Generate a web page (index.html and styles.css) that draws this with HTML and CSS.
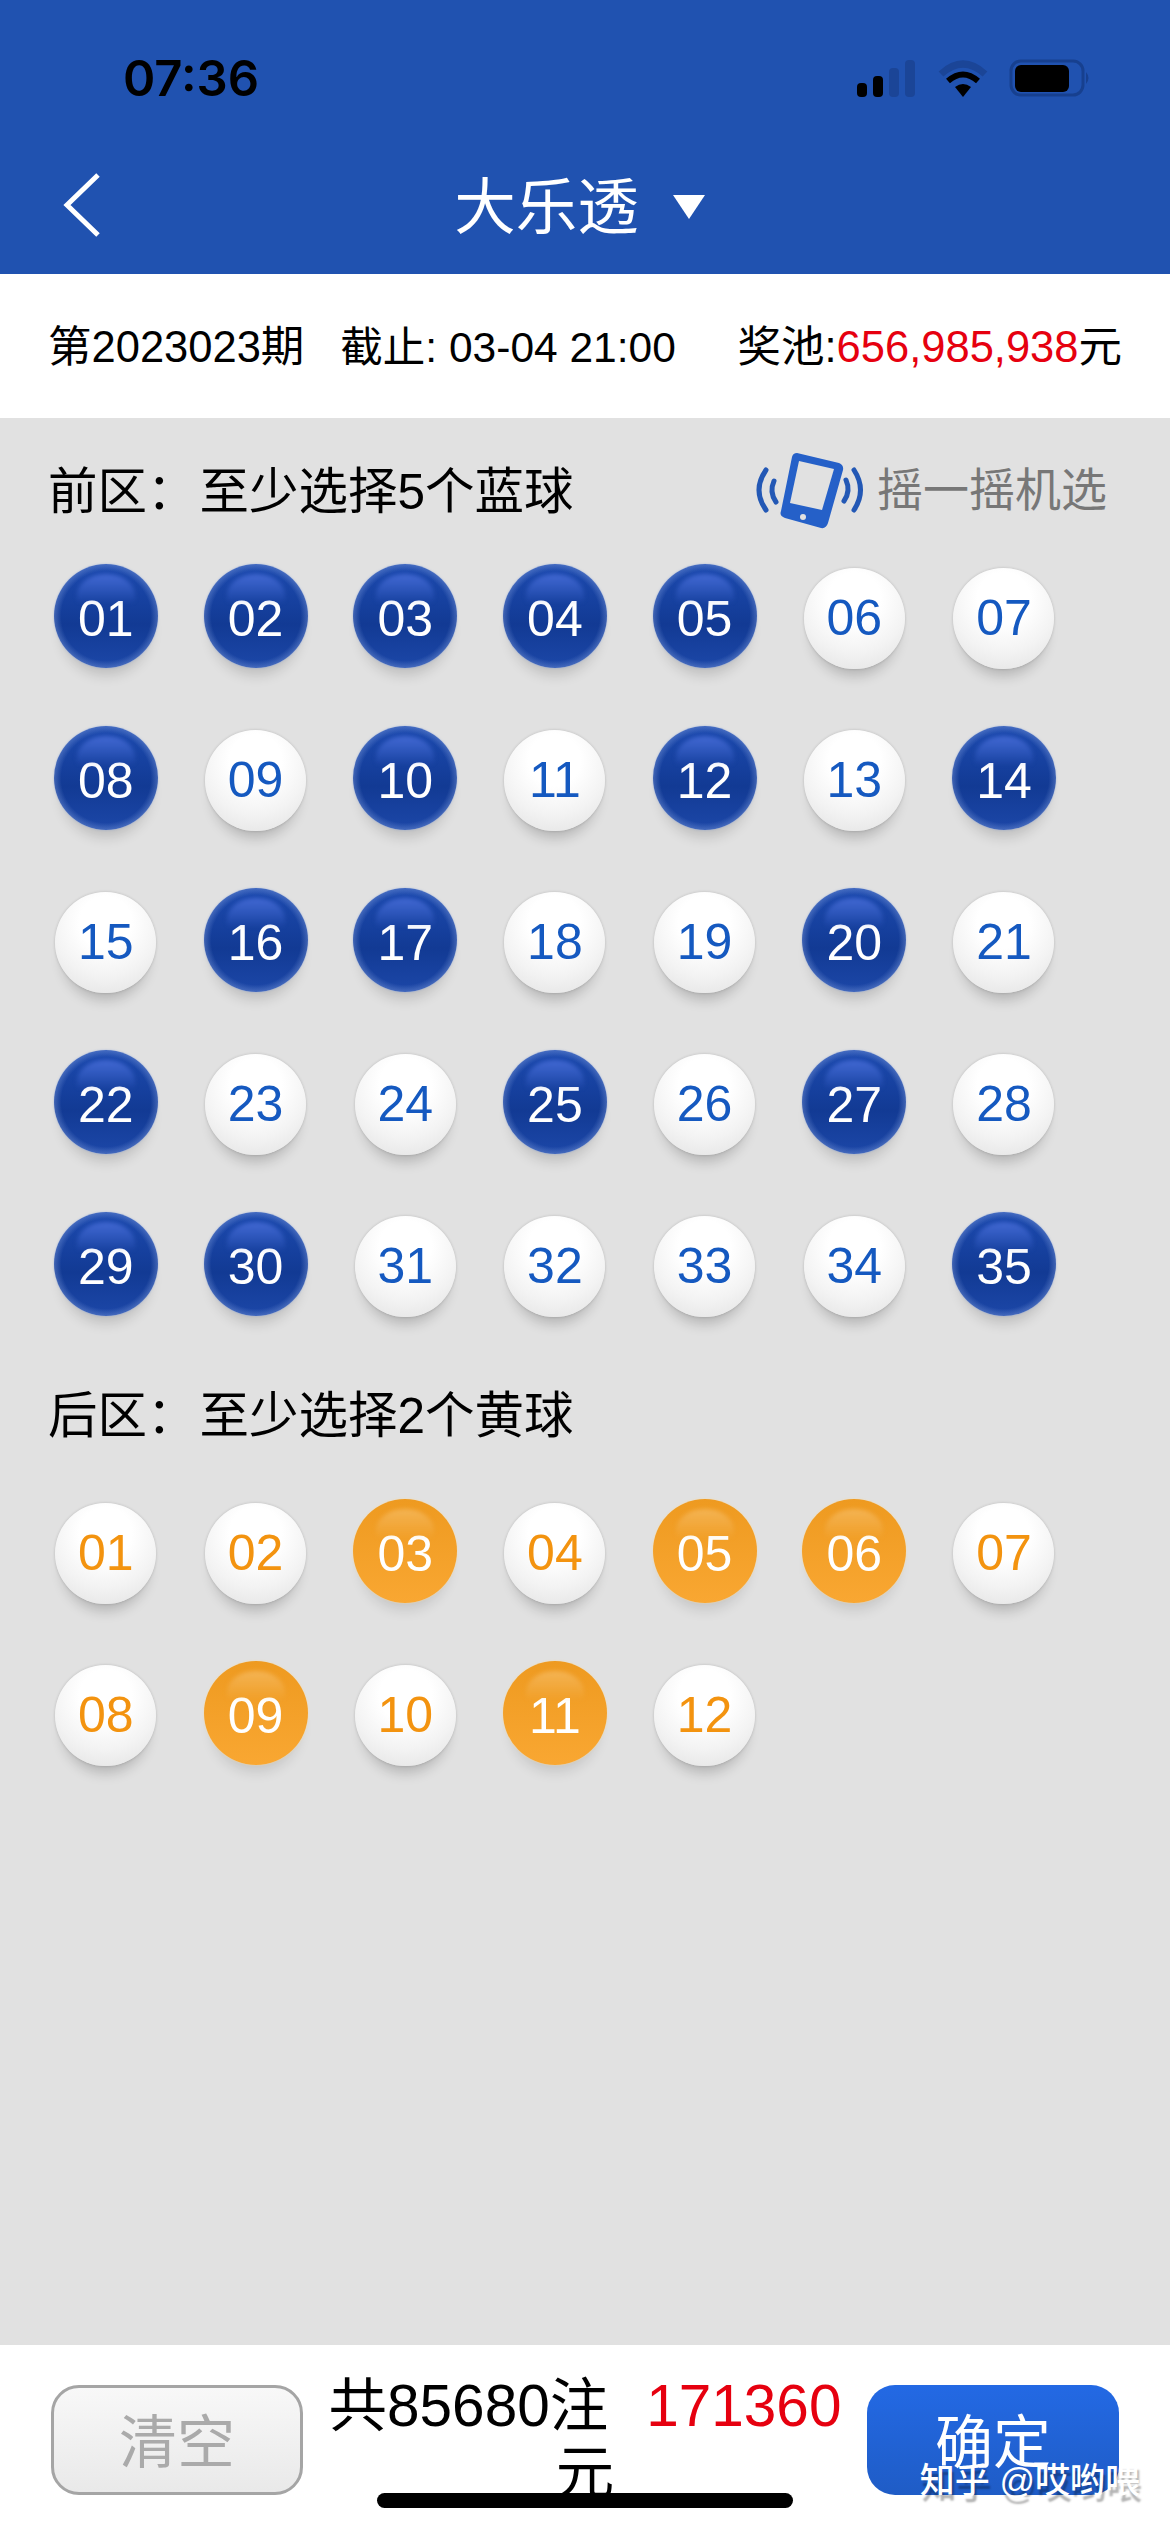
FILE: index.html
```html
<!DOCTYPE html>
<html lang="zh-CN">
<head>
  <meta charset="UTF-8">
  <meta name="viewport" content="width=device-width, initial-scale=1.0">
  <title>大乐透</title>
  <link rel="stylesheet" href="styles.css">
</head>
<body>
  <div class="app">
    <header class="header">
      <div class="status">
        <span class="time">07:36</span>
        <div class="status-icons">
          <svg class="signal" width="58" height="37" viewBox="0 0 58 37">
            <rect x="0" y="23" width="10" height="14" rx="4" fill="#000"/>
            <rect x="16" y="16" width="10" height="21" rx="4" fill="#000"/>
            <rect x="32" y="8" width="10" height="29" rx="4" fill="#1b4597"/>
            <rect x="48" y="0" width="10" height="37" rx="4" fill="#1b4597"/>
          </svg>
          <svg class="wifi" width="50" height="37" viewBox="0 0 50 37">
            <path d="M3 14 Q25 -6 47 14" fill="none" stroke="#1b4597" stroke-width="7"/>
            <path d="M10 21 Q25 8 40 21" fill="none" stroke="#000" stroke-width="6"/>
            <path d="M17 27 Q25 21 33 27 L25 37 Z" fill="#000"/>
          </svg>
          <svg class="battery" width="82" height="38" viewBox="0 0 82 38">
            <rect x="2" y="2" width="72" height="34" rx="10" fill="none" stroke="#17408f" stroke-width="3"/>
            <rect x="6" y="6" width="54" height="27" rx="6" fill="#000"/>
            <path d="M77 13 Q82 19 77 25 Z" fill="#17408f"/>
          </svg>
        </div>
      </div>
      <nav class="nav">
        <svg class="back" width="38" height="64" viewBox="0 0 38 64">
          <path d="M35 2 L4 32 L35 62" fill="none" stroke="#fff" stroke-width="5"/>
        </svg>
        <div class="title">
          <span>大乐透</span>
          <span class="caret"></span>
        </div>
      </nav>
    </header>

    <div class="info">
      <span>第2023023期</span>
      <span class="deadline">截止: 03-04 21:00</span>
      <span class="pool">奖池:<em>656,985,938</em>元</span>
    </div>

    <main class="main">
      <div class="zone-head front-head">
        <h3><span class="zone-name">前区：</span>至少选择5个蓝球</h3>
        <div class="shake">
          <svg width="110" height="78" viewBox="0 0 110 78">
            <path d="M42 1 L84 11 Q89 13 88 18 L73 71 Q71 77 66 76 L30 66 Q24 64 26 59 L37 5 Q38 1 42 1 Z" fill="#2560c8"/>
            <path d="M44 9 L79 17 L67 58 L35 51 Z" fill="#e1e1e1"/>
            <circle cx="48" cy="65" r="3" fill="#e1e1e1"/>
            <g fill="none" stroke="#2358b5" stroke-width="5" stroke-linecap="round">
              <path d="M11 18 Q-3 38 11 58"/>
              <path d="M19 29 Q14 40 21 50"/>
              <path d="M91 28 Q96 39 89 49"/>
              <path d="M99 18 Q112 38 99 58"/>
            </g>
          </svg>
          <span class="shake-label">摇一摇机选</span>
        </div>
      </div>
      <div class="balls blue">
        <div class="cell"><span class="ball on">01</span></div>
        <div class="cell"><span class="ball on">02</span></div>
        <div class="cell"><span class="ball on">03</span></div>
        <div class="cell"><span class="ball on">04</span></div>
        <div class="cell"><span class="ball on">05</span></div>
        <div class="cell"><span class="ball">06</span></div>
        <div class="cell"><span class="ball">07</span></div>
        <div class="cell"><span class="ball on">08</span></div>
        <div class="cell"><span class="ball">09</span></div>
        <div class="cell"><span class="ball on">10</span></div>
        <div class="cell"><span class="ball">11</span></div>
        <div class="cell"><span class="ball on">12</span></div>
        <div class="cell"><span class="ball">13</span></div>
        <div class="cell"><span class="ball on">14</span></div>
        <div class="cell"><span class="ball">15</span></div>
        <div class="cell"><span class="ball on">16</span></div>
        <div class="cell"><span class="ball on">17</span></div>
        <div class="cell"><span class="ball">18</span></div>
        <div class="cell"><span class="ball">19</span></div>
        <div class="cell"><span class="ball on">20</span></div>
        <div class="cell"><span class="ball">21</span></div>
        <div class="cell"><span class="ball on">22</span></div>
        <div class="cell"><span class="ball">23</span></div>
        <div class="cell"><span class="ball">24</span></div>
        <div class="cell"><span class="ball on">25</span></div>
        <div class="cell"><span class="ball">26</span></div>
        <div class="cell"><span class="ball on">27</span></div>
        <div class="cell"><span class="ball">28</span></div>
        <div class="cell"><span class="ball on">29</span></div>
        <div class="cell"><span class="ball on">30</span></div>
        <div class="cell"><span class="ball">31</span></div>
        <div class="cell"><span class="ball">32</span></div>
        <div class="cell"><span class="ball">33</span></div>
        <div class="cell"><span class="ball">34</span></div>
        <div class="cell"><span class="ball on">35</span></div>
      </div>

      <div class="zone-head back-head">
        <h3><span class="zone-name">后区：</span>至少选择2个黄球</h3>
      </div>
      <div class="balls gold">
        <div class="cell"><span class="ball">01</span></div>
        <div class="cell"><span class="ball">02</span></div>
        <div class="cell"><span class="ball on">03</span></div>
        <div class="cell"><span class="ball">04</span></div>
        <div class="cell"><span class="ball on">05</span></div>
        <div class="cell"><span class="ball on">06</span></div>
        <div class="cell"><span class="ball">07</span></div>
        <div class="cell"><span class="ball">08</span></div>
        <div class="cell"><span class="ball on">09</span></div>
        <div class="cell"><span class="ball">10</span></div>
        <div class="cell"><span class="ball on">11</span></div>
        <div class="cell"><span class="ball">12</span></div>
      </div>
    </main>

    <footer class="footer">
      <button class="btn btn-clear">清空</button>
      <div class="total">共85680注<span class="money">171360</span> 元</div>
      <button class="btn btn-ok">确定</button>
      <div class="home-bar"></div>
      <div class="watermark">知乎 @哎哟喂</div>
    </footer>
  </div>
</body>
</html>
```

FILE: styles.css
```css
* {
  box-sizing: border-box;
}

body {
  margin: 0;
  font-family: "Liberation Sans", "Noto Sans CJK SC", sans-serif;
  color: #000;
}

.app {
  display: flex;
  flex-direction: column;
  width: 1170px;
  height: 2532px;
  overflow: hidden;
  background-color: #e1e1e1;
}

/* header */
.header {
  height: 274px;
  background-color: #2052b0;
}

.status {
  display: flex;
  justify-content: space-between;
  align-items: center;
  height: 136px;
  padding: 20px 79px 0 123px;
}

.time {
  font-family: Inter, "Liberation Sans", sans-serif;
  font-size: 49px;
  font-weight: 600;
}

.status-icons {
  display: flex;
  align-items: center;
}

.wifi {
  margin-left: 23px;
}

.battery {
  margin-left: 21px;
}

.nav {
  display: grid;
  grid-template-columns: 1fr auto 1fr;
  align-items: center;
  height: 138px;
  padding: 0 74px 0 63px;
}

.title {
  display: flex;
  align-items: center;
  font-size: 61.5px;
  line-height: 70px;
  color: #fff;
}

.title span:first-child {
  margin-top: 5px;
}

.caret {
  width: 0;
  height: 0;
  margin-left: 34px;
  margin-top: 4px;
  border-left: 16px solid transparent;
  border-right: 16px solid transparent;
  border-top: 24px solid #fff;
}

/* period row */
.info {
  display: flex;
  align-items: center;
  height: 144px;
  padding: 0 48px 5px;
  background-color: #fff;
  font-size: 43.5px;
}

.deadline {
  margin-left: 36px;
  font-size: 42.5px;
}

.pool {
  margin-left: auto;
}

.pool em {
  font-style: normal;
  color: #e6000f;
}

/* ball zones */
.main {
  flex: 1;
}

.zone-head {
  display: flex;
  justify-content: space-between;
  padding-left: 48px;
}

.front-head {
  align-items: center;
  height: 119px;
  padding-right: 63px;
  padding-top: 26px;
}

.front-head h3 {
  margin-bottom: 6px;
}

.back-head {
  align-items: center;
  height: 125px;
  padding-bottom: 2px;
  padding-top: 6px;
}

.zone-head h3 {
  font-size: 49.5px;
  font-weight: 400;
  margin-top: 0;
}

.back-head h3 {
  margin-bottom: 0;
}

.zone-name {
  margin-right: 3px;
}

.shake {
  display: flex;
  align-items: center;
  gap: 12px;
  font-size: 46px;
  color: #777;
}

.shake-label {
  margin-bottom: 9px;
}

.balls {
  display: grid;
  grid-template-columns: repeat(7, 149.7px);
  grid-auto-rows: 162px;
  padding-left: 31px;
}

.cell {
  display: flex;
  justify-content: center;
  align-items: center;
}

.ball {
  position: relative;
  display: flex;
  justify-content: center;
  align-items: center;
  width: 101px;
  height: 101px;
  border-radius: 50%;
  font-size: 50px;
  background: radial-gradient(circle at 50% 30%, #fff 0, #fff 30%, #f3f3f3 62%, #e6e6e6 88%, #d8d8d8 100%);
  box-shadow: 0 0 3px rgba(0, 0, 0, 0.18), 0 15px 13px -8px rgba(0, 0, 0, 0.2);
}

.blue .ball {
  color: #1559c0;
}

.gold .ball {
  color: #f3930f;
}

.ball.on {
  width: 104px;
  height: 104px;
  margin-top: -4px;
  padding-top: 5px;
  color: #fff;
}

.ball.on::before {
  content: "";
  position: absolute;
  top: 10px;
  left: 23px;
  width: 58px;
  height: 30px;
  border-radius: 50% 50% 20% 20% / 70% 70% 12% 12%;
  filter: blur(2px);
}

.blue .ball.on {
  background:
    radial-gradient(circle closest-side, rgba(120, 150, 215, 0) 86%, rgba(120, 150, 215, 0.45) 100%),
    linear-gradient(#1d4bb0, #123a94 58%, #1c47a8);
  box-shadow: 0 0 2px rgba(120, 150, 215, 0.6), 0 15px 13px -8px rgba(0, 0, 0, 0.16);
}

.blue .ball.on::before {
  background: linear-gradient(#4268d2, rgba(30, 70, 170, 0));
}

.gold .ball.on {
  background: linear-gradient(#ee9a20, #f9a732);
  box-shadow: 0 0 2px rgba(255, 220, 150, 0.8), 0 15px 13px -8px rgba(0, 0, 0, 0.12);
}

.gold .ball.on::before {
  background: linear-gradient(#f4b455, rgba(240, 160, 40, 0));
}

/* footer */
.footer {
  position: relative;
  display: flex;
  align-items: flex-start;
  height: 187px;
  padding: 27px 51px 0;
  background-color: #fff;
}

.btn {
  flex: none;
  width: 252px;
  height: 110px;
  margin-top: 13px;
  padding: 0 0 5px;
  border-radius: 28px;
  font-family: inherit;
  font-size: 58px;
}

.btn-clear {
  border: 3px solid #a5a5a5;
  background: linear-gradient(#f8f8f8, #e9e9e9);
  color: #aaa;
}

.btn-ok {
  border: none;
  background: linear-gradient(#2369e4, #1f5cc6);
  color: #fff;
}

.total {
  flex: 1;
  padding: 0 12px;
  font-size: 58.5px;
  line-height: 67px;
  text-align: center;
}

.money {
  margin-left: 38px;
  color: #e6000f;
}

.home-bar {
  position: absolute;
  left: 377px;
  top: 148px;
  width: 416px;
  height: 15px;
  border-radius: 8px;
  background-color: #000;
}

.watermark {
  position: absolute;
  right: 30px;
  top: 107px;
  font-size: 35px;
  font-weight: 500;
  color: #fff;
  text-shadow: 2px 6px 2px rgba(0, 0, 0, 0.3);
}
```
